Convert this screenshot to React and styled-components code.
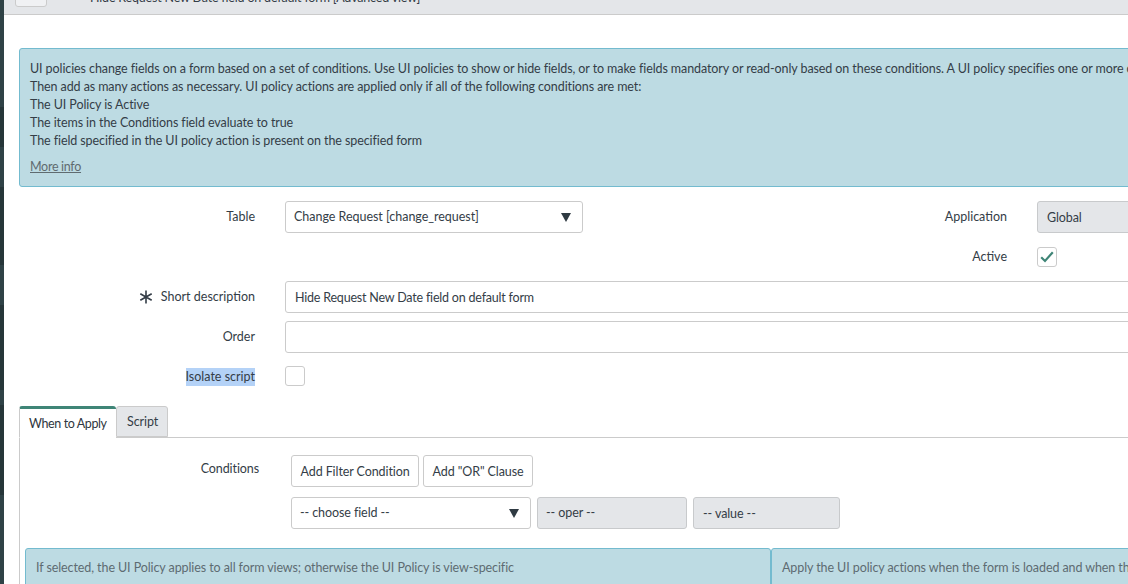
import React from "react";
import styled, { createGlobalStyle } from "styled-components";

const Global = createGlobalStyle`
  html, body { margin: 0; padding: 0; background: #fff; }
  body { font-family: "Lato", "Liberation Sans", sans-serif; font-size: 12.5px; letter-spacing: -0.09px; color: #343d47; }
  * { box-sizing: border-box; }
`;
const Frame = styled.div`display: flex; width: 1128px; height: 584px; overflow: hidden;`;
const Rail = styled.div`
  width: 4px; flex: none;
  background: linear-gradient(to bottom,
    #2f4246 0 107px, #263639 107px 147px, #2f4246 147px 187px, #263639 187px 265px,
    #2f4246 265px 305px, #263639 305px 390px, #2f4246 390px 405px, #263639 405px 495px, #2f4246 495px);
`;
const Main = styled.div`width: 1400px; flex: none;`;
const TopBar = styled.div`
  height: 15px; background: #e4e6e9; border-bottom: 1px solid #cbcbcb;
  display: flex; align-items: flex-end; overflow: hidden; padding-left: 11px; padding-bottom: 8px;
`;
const TopButton = styled.div`
  width: 32px; height: 30px; flex: none; background: #f0f1f3; border: 1px solid #cbcbcb; border-radius: 3px;
  margin-bottom: -1px;
`;
const Title = styled.div`margin-left: 43px; white-space: nowrap; line-height: 18px; margin-bottom: -1px; letter-spacing: -0.18px;`;
const Content = styled.div`padding: 33px 0 0 15px;`;
const Alert = styled.div`
  background: #bddbe3; border: 1px solid #73bbcf; border-radius: 3px;
  padding: 11px 10px 10px; line-height: 18px; white-space: nowrap; height: 139px;
`;
const MoreInfo = styled.a`display: block; margin-top: 8px; color: #5f6b70; text-decoration: underline; letter-spacing: -0.3px;`;
const TopColumns = styled.div`display: flex; margin-top: 14px;`;
const LeftCol = styled.div`width: 564px; flex: none;`;
const RightCol = styled.div`flex: 1;`;
const Row = styled.div`
  display: grid; grid-template-columns: ${p => p.$label}px 1fr; column-gap: 30px;
  height: 40px; align-items: start;
`;
const Label = styled.label`
  display: flex; justify-content: flex-end; align-items: center; gap: 8px; height: 31px; white-space: nowrap; letter-spacing: 0;
`;
const Star = styled.svg`width: 14px; height: 14px; flex: none;`;
const Selected = styled.span`background: #b4d2f7; line-height: 18px;`;
const Field = styled.div`
  height: 32px; border: 1px solid ${p => (p.$muted ? "#c8cacc" : "#cbcbcb")}; border-radius: 3px;
  background: ${p => (p.$muted ? "#e4e6e9" : "#fff")};
  display: flex; align-items: center; justify-content: space-between;
  padding: 0 ${p => (p.$select ? "11px" : "9px")} ${p => (p.$tight ? "2px" : "0")} ${p => (p.$tight ? "8px" : "9px")};
  ${p => p.$w && `width: ${p.$w}px;`} white-space: nowrap; flex: none;
  letter-spacing: ${p => p.$tracking ?? -0.09}px;
`;
const Caret = styled.span`
  width: 0; height: 0; border-left: 5px solid transparent; border-right: 5px solid transparent;
  border-top: 9px solid #2f3a42; margin-top: 3px; flex: none;
`;
const Check = styled.div`
  width: 20px; height: 20px; margin-top: ${p => p.$mt || 5}px; border: 1px solid #cbcbcb; border-radius: 3px; background: #fff;
  display: flex; align-items: center; justify-content: center;
`;
const Tabs = styled.div`margin-top: 5px; display: flex; height: 32px; position: relative; z-index: 1;`;
const Tab = styled.div`
  height: 32px; padding: 0 ${p => (p.$active ? "9px" : "10px")}; display: flex; align-items: center; white-space: nowrap;
  border: 1px solid #cbcbcb; border-radius: 3px 3px 0 0;
  ${p => p.$active
    ? "width: 97px; background:#fff; border-top: 3px solid #3f8577; border-bottom: 1px solid #fff; border-right: 0; color: #2f3640; letter-spacing: -0.4px;"
    : "width: 52px; background:#e4e6e9; height: 31px; margin-top: 0;"}
`;
const Panel = styled.div`border-left: 1px solid #cbcbcb; border-top: 1px solid #cbcbcb; margin-top: -1px; padding: 17px 0 0 5px;`;
const CondGrid = styled.div`display: grid; grid-template-columns: 234px 1fr; column-gap: 32px;`;
const CondLabel = styled.div`text-align: right; line-height: 18px; margin-top: 5px;`;
const CondBody = styled.div`display: flex; flex-direction: column; gap: 10px;`;
const CondRow = styled.div`display: flex; gap: ${p => p.$gap}px;`;
const Button = styled.button`
  height: 32px; padding: 0 8.5px; background: #fff; border: 1px solid #cbcbcb; border-radius: 3px;
  font: inherit; letter-spacing: inherit; color: inherit; white-space: nowrap;
`;
const Hints = styled.div`display: flex; margin-top: 19px;`;
const Hint = styled.div`
  width: ${p => p.$w}px; flex: none; height: 60px; background: #bddbe3; border: 1px solid #73bbcf; border-radius: 3px;
  padding: 10px 10px; line-height: 18px; color: #5d6b72; white-space: nowrap;
`;
const Asterisk = () => (
  <Star viewBox="0 0 14 14">
    <path d="M7 0.5v13M1.3 3.7l11.4 6.6M12.7 3.7L1.3 10.3" stroke="#343d47" strokeWidth="1.6" fill="none" />
  </Star>
);

export default function App() {
  return (
    <Frame>
      <Global />
      <Rail />
      <Main>
        <TopBar>
          <TopButton />
          <Title>Hide Request New Date field on default form [Advanced view]</Title>
        </TopBar>
        <Content>
          <Alert>
            <div>UI policies change fields on a form based on a set of conditions. Use UI policies to show or hide fields, or to make fields mandatory or read-only based on these conditions. A UI policy specifies one or more conditions.</div>
            <div>Then add as many actions as necessary. UI policy actions are applied only if all of the following conditions are met:</div>
            <div>The UI Policy is Active</div>
            <div>The items in the Conditions field evaluate to true</div>
            <div>The field specified in the UI policy action is present on the specified form</div>
            <MoreInfo>More info</MoreInfo>
          </Alert>
          <TopColumns>
            <LeftCol>
              <Row $label={236}>
                <Label>Table</Label>
                <Field $select $tight $tracking={-0.03} $w={298}>Change Request [change_request]<Caret /></Field>
              </Row>
            </LeftCol>
            <RightCol>
              <Row $label={424}>
                <Label>Application</Label>
                <Field $muted>Global</Field>
              </Row>
              <Row $label={424}>
                <Label>Active</Label>
                <Check $mt={6}>
                  <svg width="14" height="12" viewBox="0 0 14 12">
                    <path d="M1.2 6.2L5 10l7.8-8.8" stroke="#3f8577" strokeWidth="2.2" fill="none" />
                  </svg>
                </Check>
              </Row>
            </RightCol>
          </TopColumns>
          <Row $label={236}>
            <Label><Asterisk />Short description</Label>
            <Field $tracking={-0.2}>Hide Request New Date field on default form</Field>
          </Row>
          <Row $label={236}>
            <Label>Order</Label>
            <Field />
          </Row>
          <Row $label={236}>
            <Label><Selected>Isolate script</Selected></Label>
            <Check />
          </Row>
          <Tabs>
            <Tab $active>When to Apply</Tab>
            <Tab>Script</Tab>
          </Tabs>
          <Panel>
            <CondGrid>
              <CondLabel>Conditions</CondLabel>
              <CondBody>
                <CondRow $gap={4}>
                  <Button>Add Filter Condition</Button>
                  <Button>Add "OR" Clause</Button>
                </CondRow>
                <CondRow $gap={6}>
                  <Field $select $tight $w={240}>-- choose field --<Caret /></Field>
                  <Field $muted $tight $w={150}>-- oper --</Field>
                  <Field $muted $w={147}>-- value --</Field>
                </CondRow>
              </CondBody>
            </CondGrid>
            <Hints>
              <Hint $w={746}>If selected, the UI Policy applies to all form views; otherwise the UI Policy is view-specific</Hint>
              <Hint $w={500}>Apply the UI policy actions when the form is loaded and when the form changes</Hint>
            </Hints>
          </Panel>
        </Content>
      </Main>
    </Frame>
  );
}
